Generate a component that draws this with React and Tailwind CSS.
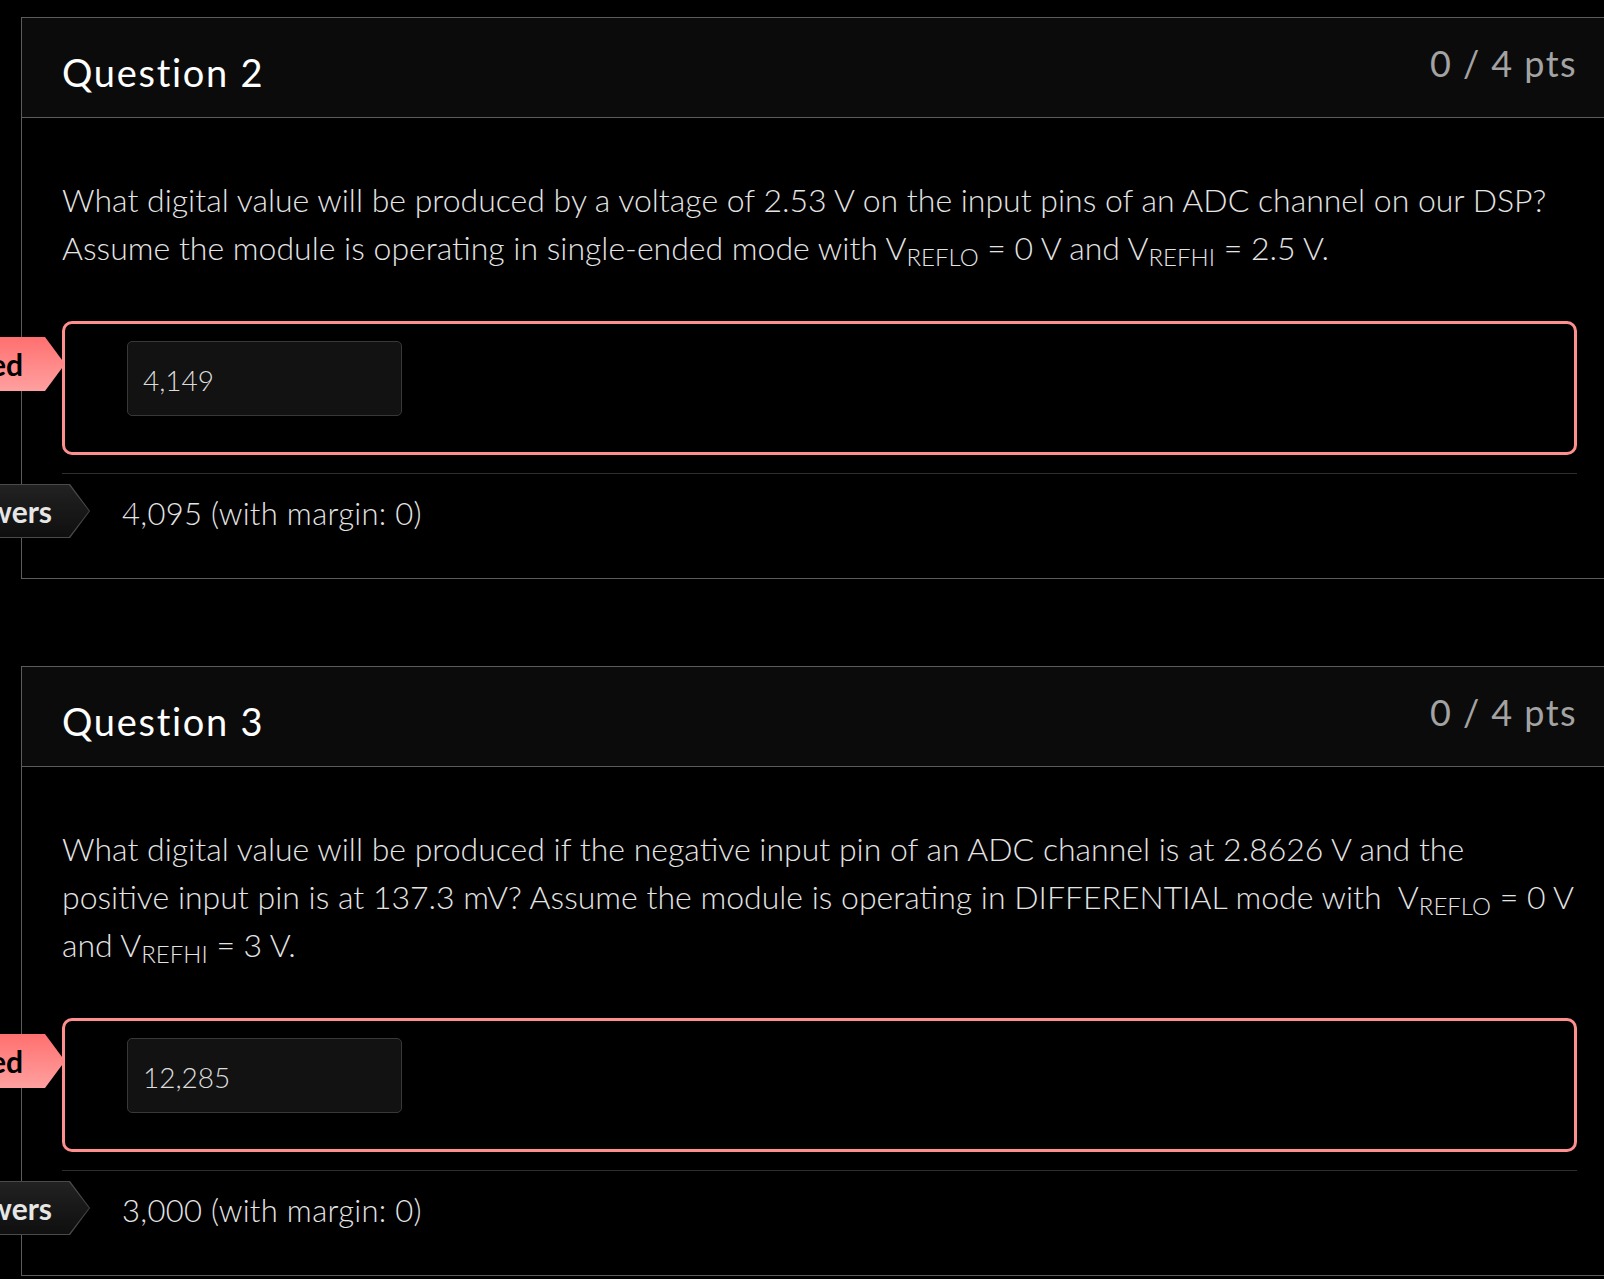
import React from "react";

const font = { fontFamily: "Lato, 'Noto Sans', sans-serif" };

function PinkTag() {
  return (
    <div className="absolute right-full top-[13px] h-[54px] w-[240px] [clip-path:polygon(0_0,calc(100%-20px)_0,100%_50%,calc(100%-20px)_100%,0_100%)] bg-gradient-to-b from-[#ff6f6f] to-[#ffa0a0] flex items-center justify-end pr-[42px]">
      <span className="text-[30px] font-bold text-black leading-none whitespace-nowrap">You Answered</span>
    </div>
  );
}

function DarkTag() {
  return (
    <div className="absolute right-[calc(100%-28px)] top-[10px] h-[54px] w-[300px] [clip-path:polygon(0_0,calc(100%-20px)_0,100%_50%,calc(100%-20px)_100%,0_100%)] bg-[#4a4a4a] p-px">
      <div className="h-full w-full [clip-path:polygon(0_0,calc(100%-20px)_0,100%_50%,calc(100%-20px)_100%,0_100%)] bg-gradient-to-b from-[#222222] to-[#0f0f0f] flex items-center justify-end pr-[37px]">
        <span className="text-[30px] font-bold text-[#e6e6e6] leading-none whitespace-nowrap">Correct Answers</span>
      </div>
    </div>
  );
}

function Card({ title, children, answer, correct }) {
  return (
    <div className="w-[1597px] shrink-0 border border-[#5c5c5c] bg-black">
      <div className="h-[100px] bg-[#0b0b0b] border-b border-[#5c5c5c] flex justify-between items-start px-[40px]">
        <div className="pt-[35px] text-[38px] leading-none tracking-[0.045em] text-white">{title}</div>
        <div className="pt-[27px] text-[36px] leading-none tracking-[0.04em] text-[#a3a3a3]">0 / 4 pts</div>
      </div>
      <div className="px-[40px]">
        <div className="pt-[58px] text-[32px] leading-[48px] font-light text-[#e4e4e4] whitespace-nowrap">
          {children}
        </div>
        <div className="relative mt-[49px] h-[134px] rounded-[10px] border-[3px] border-[#ff8e8e] pt-[17px] pl-[62px]">
          <PinkTag />
          <div className="w-[275px] h-[75px] rounded-[5px] border border-[#383838] bg-[#121212] flex items-center pl-[15px] pt-[3px]">
            <span className="text-[28px] font-light text-[#dcdcdc] leading-none">{answer}</span>
          </div>
        </div>
        <div className="mt-[18px] h-px bg-[#2e2e2e]" />
        <div className="relative pt-[24px] pb-[49px] pl-[60px]">
          <DarkTag />
          <div className="text-[31px] leading-[31px] tracking-[0.01em] font-light text-[#e4e4e4] whitespace-nowrap">{correct}</div>
        </div>
      </div>
    </div>
  );
}

const Sub = ({ children }) => <sub className="text-[24px]">{children}</sub>;

export default function App() {
  return (
    <div style={font} className="w-[1604px] h-[1279px] overflow-hidden bg-black pl-[21px] pt-[17px] flex flex-col">
      <Card title="Question 2" answer="4,149" correct="4,095 (with margin: 0)">
        What digital value will be produced by a voltage of 2.53 V on the input pins of an ADC channel on our DSP?
        <br />
        Assume the module is operating in single-ended mode with V<Sub>REFLO</Sub> = 0 V and V<Sub>REFHI</Sub> = 2.5 V.
      </Card>
      <div className="h-[87px] shrink-0" />
      <Card title="Question 3" answer="12,285" correct="3,000 (with margin: 0)">
        What digital value will be produced if the negative input pin of an ADC channel is at 2.8626 V and the
        <br />
        positive input pin is at 137.3 mV? Assume the module is operating in DIFFERENTIAL mode with&nbsp; V<Sub>REFLO</Sub> = 0 V
        <br />
        and V<Sub>REFHI</Sub> = 3 V.
      </Card>
    </div>
  );
}
